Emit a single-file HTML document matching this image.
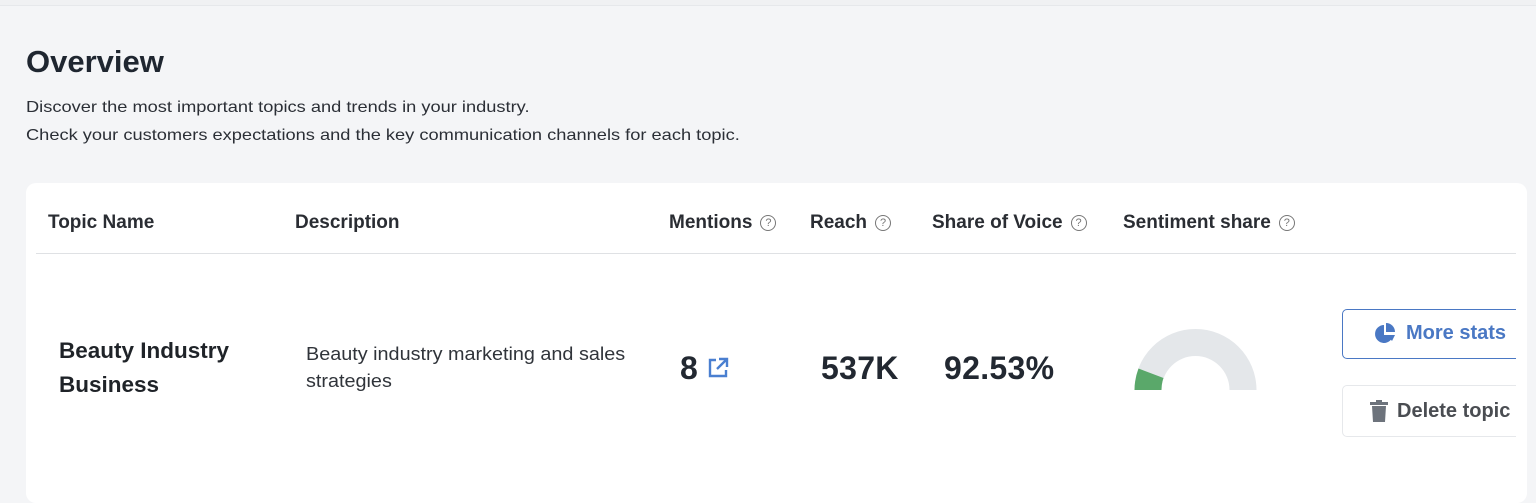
<!DOCTYPE html>
<html><head><meta charset="utf-8"><style>
*{margin:0;padding:0;box-sizing:border-box}
body{width:1536px;height:483px;background:#f4f5f7;font-family:"Liberation Sans",sans-serif;color:#222831;position:relative;overflow:hidden}
.a{position:absolute;white-space:nowrap}
.topline{position:absolute;left:0;top:0;width:1536px;height:6px;background:#f0f1f3;border-bottom:1px solid #e6e8eb}
.card{position:absolute;left:26px;top:183px;width:1501px;height:320px;background:#fff;border-radius:10px}
.th{font-size:19px;top:212px;color:#2a2d33;font-weight:bold}
.q{display:inline-block;width:16px;height:16px;border:1.3px solid #777;border-radius:50%;font-size:11px;text-align:center;line-height:14px;color:#777;vertical-align:2px;margin-left:8px;font-weight:normal}
.big{font-size:32px;font-weight:bold;top:350px;letter-spacing:0.3px}
.clip{position:absolute;left:1330px;top:290px;width:186px;height:170px;overflow:hidden}
.btn{position:absolute;left:12px;width:200px;border-radius:5px;font-size:20px;font-weight:bold}
.sub{font-size:16px;color:#2b2f36;transform:scaleX(1.14);transform-origin:left}
</style></head><body>
<div class="topline"></div>
<div class="a" style="left:26px;top:44px;font-size:31px;font-weight:bold;color:#1f2630">Overview</div>
<div class="a sub" style="left:26px;top:99px">Discover the most important topics and trends in your industry.</div>
<div class="a sub" style="left:26px;top:127px">Check your customers expectations and the key communication channels for each topic.</div>
<div class="card"></div>
<div class="a th" style="left:48px">Topic Name</div>
<div class="a th" style="left:295px">Description</div>
<div class="a th" style="left:669px">Mentions<span class="q">?</span></div>
<div class="a th" style="left:810px">Reach<span class="q">?</span></div>
<div class="a th" style="left:932px">Share of Voice<span class="q">?</span></div>
<div class="a th" style="left:1123px">Sentiment share<span class="q">?</span></div>
<div style="position:absolute;left:36px;top:253px;width:1480px;height:1px;background:#dfe1e4"></div>
<div class="a" style="left:59px;top:334px;font-size:22.5px;font-weight:bold;line-height:34px;color:#1f2328">Beauty Industry<br>Business</div>
<div class="a" style="left:306px;top:341px;font-size:18px;line-height:27px;color:#30343a;transform:scaleX(1.1);transform-origin:left">Beauty industry marketing and sales<br>strategies</div>
<div class="a big" style="left:680px">8</div>
<svg class="a" style="left:706px;top:356px" width="24" height="24" viewBox="0 0 24 24" fill="none" stroke="#4a7fd0" stroke-width="2.4"><path d="M10 4H4v16h16v-6"/><path d="M13 3h8v8M21 3L11 13"/></svg>
<div class="a big" style="left:821px">537K</div>
<div class="a big" style="left:944px">92.53%</div>
<svg class="a" style="left:1130px;top:325px" width="132" height="70" viewBox="1130 325 132 70">
<path d="M1134.5 390A61 61 0 0 1 1256.5 390L1229.5 390A34 34 0 0 0 1161.5 390Z" fill="#e4e7ea"/>
<path d="M1134.5 390A61 61 0 0 1 1138.5 368.5L1163.5 378A34 34 0 0 0 1161.5 390Z" fill="#5aa86a"/>
</svg>
<div class="clip">
<div class="btn" style="top:19px;height:50px;border:1.5px solid #4a78c4;color:#4a78c4;line-height:46px;padding-left:30px">
<svg style="position:absolute;left:31px;top:13px" width="22" height="22" viewBox="0 0 22 22"><path d="M10 2A9 9 0 1 0 19 12H10Z" fill="#4a78c4"/><path d="M12 0A9 9 0 0 1 21 9H12Z" fill="#4a78c4"/><path d="M13 12h8l-3 6z" fill="#4a78c4"/></svg>
<span style="margin-left:33px">More stats</span></div>
<div class="btn" style="top:95px;height:52px;border:1px solid #e6e8eb;color:#4a4d52;line-height:50px;font-weight:bold;padding-left:30px">
<svg style="position:absolute;left:27px;top:14px" width="18" height="22" viewBox="0 0 18 22"><rect x="0" y="2" width="18" height="3" fill="#6d737c"/><rect x="6" y="0" width="6" height="3" fill="#6d737c"/><path d="M2 6h14l-1 16H3Z" fill="#6d737c"/></svg>
<span style="margin-left:24px">Delete topic</span></div>
</div>
</body></html>
